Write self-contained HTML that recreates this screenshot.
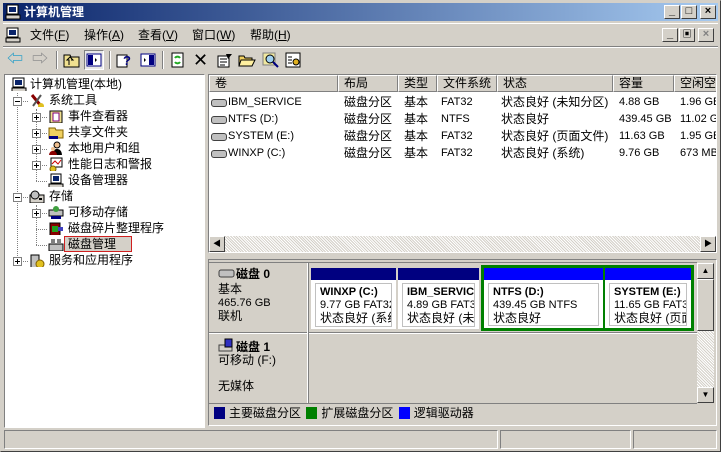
<!DOCTYPE html>
<html><head><meta charset="utf-8">
<style>
*{margin:0;padding:0;box-sizing:border-box}
body{width:721px;height:452px;background:#d4d0c8;font-family:"Liberation Sans","Noto Sans CJK SC","WenQuanYi Zen Hei",sans-serif;font-size:12px;color:#000;position:relative;overflow:hidden}
.a{position:absolute;white-space:nowrap}
.in{border-top:1px solid #808080;border-left:1px solid #808080;border-right:1px solid #fff;border-bottom:1px solid #fff}
.btn{position:absolute;width:16px;height:14px;background:#d4d0c8;border-top:1px solid #fff;border-left:1px solid #fff;border-right:1px solid #404040;border-bottom:1px solid #404040;font-size:11px;line-height:11px;text-align:center;font-weight:bold}
.hdr{position:absolute;top:0;height:17px;background:#d4d0c8;border-top:1px solid #fff;border-left:1px solid #fff;border-right:1px solid #808080;border-bottom:1px solid #808080;padding-left:5px;line-height:15px}
.row{position:absolute;left:0;height:17px;line-height:17px;font-size:11px}
.tree div{position:absolute;white-space:nowrap;line-height:16px}
.tree .pm{position:absolute;width:9px;height:9px;border:1px solid #808080;background:#fff;z-index:2}
.pm::before{content:"";position:absolute;left:1px;top:3px;width:5px;height:1px;background:#000}
.pm.p::after{content:"";position:absolute;left:3px;top:1px;width:1px;height:5px;background:#000}
.tree .vl{position:absolute;width:1px;border-left:1px dotted #808080}
.tree .hl{position:absolute;height:1px;border-top:1px dotted #808080}
.ico{position:absolute;width:16px;height:14px}
.part{position:absolute;top:268px;height:61px;background:#fff}
.part .bar{height:12px}
.part .box{position:absolute;left:4px;right:4px;top:15px;bottom:2px;border:1px solid #c0c0c0;background:#fff;padding:2px 0 0 4px;font-size:11px;line-height:13px;overflow:hidden;white-space:nowrap}
.sq{display:inline-block;width:11px;height:12px;vertical-align:-2px;margin-right:4px}
.dither{background-color:#e8e8e8;background-image:repeating-linear-gradient(45deg,#d4d0c8 0 1px,#fff 1px 2px)}
</style></head><body>
<div class="a" style="left:0;top:0;width:721px;height:452px;border:1px solid #d4d0c8;border-right-color:#404040;border-bottom-color:#404040"></div>
<div class="a" style="left:3px;top:3px;width:715px;height:18px;background:linear-gradient(90deg,#0a246a,#a6caf0)"></div>
<svg class="a" style="left:5px;top:4px" width="16" height="16"><rect x="2" y="1" width="11" height="9" fill="#fff" stroke="#000"/><rect x="4" y="3" width="7" height="5" fill="#0a246a"/><rect x="1" y="11" width="14" height="4" fill="#d4d0c8" stroke="#000"/></svg>
<div class="a" style="left:24px;top:4px;color:#fff;font-weight:bold;font-size:12px;line-height:16px">计算机管理</div>
<div class="btn" style="left:664px;top:5px">_</div>
<div class="btn" style="left:681px;top:5px">□</div>
<div class="btn" style="left:700px;top:5px">×</div>
<div class="a" style="left:3px;top:23px;width:715px;height:1px;background:#fff"></div>
<svg class="a" style="left:5px;top:27px" width="16" height="16"><rect x="2" y="1" width="11" height="9" fill="#fff" stroke="#000"/><rect x="4" y="3" width="7" height="5" fill="#0a246a"/><rect x="1" y="11" width="14" height="4" fill="#d4d0c8" stroke="#000"/></svg>
<div class="a" style="left:30px;top:27px;line-height:16px">文件(<u>F</u>)</div>
<div class="a" style="left:84px;top:27px;line-height:16px">操作(<u>A</u>)</div>
<div class="a" style="left:138px;top:27px;line-height:16px">查看(<u>V</u>)</div>
<div class="a" style="left:192px;top:27px;line-height:16px">窗口(<u>W</u>)</div>
<div class="a" style="left:250px;top:27px;line-height:16px">帮助(<u>H</u>)</div>
<div class="btn" style="left:662px;top:28px">_</div>
<div class="btn" style="left:679px;top:28px;font-size:9px">▣</div>
<div class="btn" style="left:698px;top:28px;color:#808080">×</div>
<div class="a" style="left:3px;top:46px;width:715px;height:1px;background:#808080"></div>
<div class="a" style="left:3px;top:47px;width:715px;height:1px;background:#fff"></div>
<div class="a" style="left:7px;top:50px;color:#30a0c8;font-size:16px;line-height:20px;font-weight:bold">⇦</div>
<div class="a" style="left:32px;top:50px;color:#909090;font-size:16px;line-height:20px;font-weight:bold">⇨</div>
<div class="a" style="left:56px;top:51px;width:2px;height:18px;border-left:1px solid #808080;border-right:1px solid #fff"></div>
<svg class="a" style="left:63px;top:52px" width="18" height="16"><path d="M1 3h6l1 2h8v10H1z" fill="#f0e090" stroke="#000"/><path d="M6 13V8h-2l3-3 3 3H8" fill="none" stroke="#000"/></svg>
<div class="a" style="left:84px;top:50px;width:20px;height:20px;border-top:1px solid #808080;border-left:1px solid #808080;border-right:1px solid #fff;border-bottom:1px solid #fff;background:#e8e8e8"></div>
<svg class="a" style="left:86px;top:53px" width="16" height="14"><rect x="1" y="1" width="14" height="12" fill="#fff" stroke="#000080"/><rect x="2" y="2" width="5" height="10" fill="#000080"/><path d="M9 5l2 2-2 2z" fill="#000"/></svg>
<div class="a" style="left:109px;top:51px;width:2px;height:18px;border-left:1px solid #808080;border-right:1px solid #fff"></div>
<svg class="a" style="left:116px;top:52px" width="18" height="16"><rect x="1" y="3" width="10" height="12" fill="#fff" stroke="#000"/><text x="7" y="13" font-size="13" font-weight="bold" fill="#000080" font-family="Liberation Sans">?</text></svg>
<svg class="a" style="left:140px;top:53px" width="16" height="14"><rect x="1" y="1" width="14" height="12" fill="#fff" stroke="#000080"/><rect x="9" y="2" width="5" height="10" fill="#000080"/><path d="M4 5l2 2-2 2z" fill="#000"/></svg>
<div class="a" style="left:162px;top:51px;width:2px;height:18px;border-left:1px solid #808080;border-right:1px solid #fff"></div>
<svg class="a" style="left:171px;top:52px" width="14" height="16"><rect x="1" y="1" width="11" height="14" fill="#fff" stroke="#000"/><path d="M4 6a3 3 0 0 1 5 0M9 10a3 3 0 0 1-5 0" stroke="#2a2" stroke-width="2" fill="none"/></svg>
<div class="a" style="left:193px;top:49px;font-size:18px;line-height:22px">✕</div>
<svg class="a" style="left:216px;top:52px" width="18" height="16"><rect x="2" y="4" width="11" height="11" fill="#fff" stroke="#000"/><path d="M4 7h7M4 10h7M4 13h5" stroke="#000"/><path d="M10 2l6 0-4 5z" fill="#000"/></svg>
<svg class="a" style="left:238px;top:52px" width="18" height="16"><path d="M1 4h5l1 2h7v8H1z" fill="#f0d060" stroke="#000"/><path d="M3 8h14l-3 6H1z" fill="#fff0a0" stroke="#000"/></svg>
<svg class="a" style="left:262px;top:52px" width="18" height="16"><rect x="1" y="1" width="12" height="12" fill="#f0e8a0" stroke="#808080"/><circle cx="8" cy="7" r="4" fill="#a0d0f0" stroke="#000"/><path d="M11 10l5 5" stroke="#000080" stroke-width="2"/></svg>
<svg class="a" style="left:285px;top:52px" width="18" height="16"><rect x="1" y="1" width="14" height="14" fill="#fff" stroke="#000"/><path d="M3 5h4M3 8h4M3 11h4" stroke="#000"/><circle cx="11" cy="10" r="3" fill="#e0b020" stroke="#000"/></svg>
<div class="a in" style="left:4px;top:74px;width:201px;height:354px;background:#fff"></div>
<div class="tree" style="position:absolute;left:0;top:0">
<div class="vl" style="left:17px;top:93px;height:169px"></div>
<div class="vl" style="left:36px;top:109px;height:72px"></div>
<div class="vl" style="left:36px;top:205px;height:40px"></div>
<div class="hl" style="left:17px;top:101px;width:11px"></div>
<div class="hl" style="left:17px;top:197px;width:11px"></div>
<div class="hl" style="left:17px;top:261px;width:11px"></div>
<div class="hl" style="left:36px;top:117px;width:11px"></div>
<div class="hl" style="left:36px;top:133px;width:11px"></div>
<div class="hl" style="left:36px;top:149px;width:11px"></div>
<div class="hl" style="left:36px;top:165px;width:11px"></div>
<div class="hl" style="left:36px;top:181px;width:11px"></div>
<div class="hl" style="left:36px;top:213px;width:11px"></div>
<div class="hl" style="left:36px;top:229px;width:11px"></div>
<div class="hl" style="left:36px;top:245px;width:11px"></div>
<svg class="ico" style="left:11px;top:77px" width="16" height="16"><rect x="2" y="1" width="11" height="9" fill="#fff" stroke="#000"/><rect x="4" y="3" width="7" height="5" fill="#0a246a"/><rect x="1" y="11" width="14" height="4" fill="#d4d0c8" stroke="#000"/></svg>
<div style="left:30px;top:76px">计算机管理(本地)</div>
<div class="pm" style="left:13px;top:97px"></div>
<svg class="ico" style="left:29px;top:93px" width="16" height="16"><path d="M3 2l9 11" stroke="#800" stroke-width="3"/><path d="M12 2l-8 11" stroke="#555" stroke-width="2"/><circle cx="12" cy="13" r="3" fill="#e0c020"/></svg>
<div style="left:49px;top:92px">系统工具</div>
<div class="pm p" style="left:32px;top:113px"></div>
<svg class="ico" style="left:48px;top:109px" width="16" height="16"><rect x="2" y="2" width="12" height="12" fill="#f0e090" stroke="#000"/><rect x="5" y="4" width="6" height="8" fill="#fff" stroke="#800080"/></svg>
<div style="left:68px;top:108px">事件查看器</div>
<div class="pm p" style="left:32px;top:129px"></div>
<svg class="ico" style="left:48px;top:125px" width="16" height="16"><path d="M1 3h6l1 2h7v8H1z" fill="#f0d060" stroke="#806000"/><rect x="1" y="11" width="9" height="4" fill="#000080"/></svg>
<div style="left:68px;top:124px">共享文件夹</div>
<div class="pm p" style="left:32px;top:145px"></div>
<svg class="ico" style="left:48px;top:141px" width="16" height="16"><circle cx="9" cy="4" r="3" fill="#f0c090" stroke="#000"/><path d="M4 15c0-6 3-7 5-7s5 1 5 7z" fill="#000"/><circle cx="5" cy="8" r="2" fill="#f0c090"/><path d="M1 15c0-4 2-5 4-5s4 1 4 5z" fill="#800"/></svg>
<div style="left:68px;top:140px">本地用户和组</div>
<div class="pm p" style="left:32px;top:161px"></div>
<svg class="ico" style="left:48px;top:157px" width="16" height="16"><rect x="3" y="1" width="11" height="9" fill="#fff" stroke="#000"/><path d="M4 7l3-3 3 3 3-4" stroke="#c00" fill="none"/><circle cx="5" cy="12" r="3" fill="#e0c020" stroke="#806000"/></svg>
<div style="left:68px;top:156px">性能日志和警报</div>
<svg class="ico" style="left:48px;top:173px" width="16" height="16"><rect x="3" y="1" width="10" height="9" fill="#fff" stroke="#000"/><rect x="5" y="3" width="6" height="5" fill="#0a246a"/><rect x="1" y="11" width="14" height="4" fill="#d4d0c8" stroke="#000"/></svg>
<div style="left:68px;top:172px">设备管理器</div>
<div class="pm" style="left:13px;top:193px"></div>
<svg class="ico" style="left:29px;top:189px" width="16" height="16"><rect x="1" y="6" width="14" height="8" fill="#d4d0c8" stroke="#000"/><circle cx="6" cy="6" r="4" fill="#c0c0c0" stroke="#000"/><rect x="10" y="9" width="3" height="2" fill="#000"/></svg>
<div style="left:49px;top:188px">存储</div>
<div class="pm p" style="left:32px;top:209px"></div>
<svg class="ico" style="left:48px;top:205px" width="16" height="16"><rect x="1" y="5" width="14" height="6" fill="#c0c0c0" stroke="#000"/><circle cx="8" cy="4" r="3" fill="#40a040"/><rect x="3" y="11" width="10" height="4" fill="#000080"/></svg>
<div style="left:68px;top:204px">可移动存储</div>
<svg class="ico" style="left:48px;top:221px" width="16" height="16"><rect x="2" y="2" width="10" height="13" fill="#800" stroke="#000"/><rect x="4" y="5" width="6" height="6" fill="#20a020"/><rect x="10" y="6" width="5" height="4" fill="#4040c0"/></svg>
<div style="left:68px;top:220px">磁盘碎片整理程序</div>
<svg class="ico" style="left:48px;top:237px" width="16" height="16"><rect x="1" y="7" width="14" height="7" fill="#c0c0c0" stroke="#000"/><path d="M3 2h4v5H3zM9 2h4v5H9z" fill="#808080"/></svg>
<div style="left:64px;top:236px;width:68px;height:16px;border:1px solid #d02020;background:#d4d0c8;padding-left:3px;line-height:14px">磁盘管理</div>
<div class="pm p" style="left:13px;top:257px"></div>
<svg class="ico" style="left:29px;top:253px" width="16" height="16"><rect x="2" y="2" width="8" height="13" fill="#c0c0c0" stroke="#000"/><circle cx="11" cy="11" r="4" fill="#e0c020" stroke="#806000"/></svg>
<div style="left:49px;top:252px">服务和应用程序</div>
</div>
<div class="a in" style="left:208px;top:74px;width:509px;height:179px;background:#fff;overflow:hidden">
 <div class="hdr" style="left:0;width:129px">卷</div>
 <div class="hdr" style="left:129px;width:60px">布局</div>
 <div class="hdr" style="left:189px;width:39px">类型</div>
 <div class="hdr" style="left:228px;width:60px">文件系统</div>
 <div class="hdr" style="left:288px;width:116px">状态</div>
 <div class="hdr" style="left:404px;width:61px">容量</div>
 <div class="hdr" style="left:465px;width:60px">空闲空间</div>
 <div class="row" style="top:19px;width:600px"><span class="a" style="left:2px;top:5px;width:16px;height:8px;border:1px solid #404040;border-radius:3px;background:#c0c0c0"></span><span class="a" style="left:19px">IBM_SERVICE</span><span class="a" style="left:135px;font-size:12px">磁盘分区</span><span class="a" style="left:195px;font-size:12px">基本</span><span class="a" style="left:232px">FAT32</span><span class="a" style="left:292px;font-size:12px">状态良好 (未知分区)</span><span class="a" style="left:410px">4.88 GB</span><span class="a" style="left:471px">1.96 GB</span></div>
 <div class="row" style="top:36px;width:600px"><span class="a" style="left:2px;top:5px;width:16px;height:8px;border:1px solid #404040;border-radius:3px;background:#c0c0c0"></span><span class="a" style="left:19px">NTFS (D:)</span><span class="a" style="left:135px;font-size:12px">磁盘分区</span><span class="a" style="left:195px;font-size:12px">基本</span><span class="a" style="left:232px">NTFS</span><span class="a" style="left:292px;font-size:12px">状态良好</span><span class="a" style="left:410px">439.45 GB</span><span class="a" style="left:471px">11.02 GB</span></div>
 <div class="row" style="top:53px;width:600px"><span class="a" style="left:2px;top:5px;width:16px;height:8px;border:1px solid #404040;border-radius:3px;background:#c0c0c0"></span><span class="a" style="left:19px">SYSTEM (E:)</span><span class="a" style="left:135px;font-size:12px">磁盘分区</span><span class="a" style="left:195px;font-size:12px">基本</span><span class="a" style="left:232px">FAT32</span><span class="a" style="left:292px;font-size:12px">状态良好 (页面文件)</span><span class="a" style="left:410px">11.63 GB</span><span class="a" style="left:471px">1.95 GB</span></div>
 <div class="row" style="top:70px;width:600px"><span class="a" style="left:2px;top:5px;width:16px;height:8px;border:1px solid #404040;border-radius:3px;background:#c0c0c0"></span><span class="a" style="left:19px">WINXP (C:)</span><span class="a" style="left:135px;font-size:12px">磁盘分区</span><span class="a" style="left:195px;font-size:12px">基本</span><span class="a" style="left:232px">FAT32</span><span class="a" style="left:292px;font-size:12px">状态良好 (系统)</span><span class="a" style="left:410px">9.76 GB</span><span class="a" style="left:471px">673 MB</span></div>
 <div class="a dither" style="left:0;top:161px;width:507px;height:16px"></div>
 <div class="btn" style="left:0;top:161px;height:16px;font-size:8px;line-height:13px">◀</div>
 <div class="btn" style="left:491px;top:161px;height:16px;font-size:8px;line-height:13px">▶</div>
</div>
<div class="a in" style="left:208px;top:259px;width:509px;height:167px;background:#d4d0c8"></div>
<div class="a" style="left:209px;top:262px;width:488px;height:1px;background:#808080"></div>
<div class="a" style="left:209px;top:332px;width:488px;height:1px;background:#808080"></div>
<div class="a" style="left:209px;top:333px;width:488px;height:1px;background:#fff"></div>
<div class="a" style="left:307px;top:263px;width:1px;height:140px;background:#fff"></div>
<div class="a" style="left:308px;top:263px;width:1px;height:140px;background:#808080"></div>
<div class="a" style="left:209px;top:403px;width:488px;height:1px;background:#808080"></div>
<svg class="a" style="left:218px;top:268px" width="18" height="12"><rect x="1" y="2" width="15" height="7" rx="2" fill="#c0c0c0" stroke="#404040"/></svg>
<div class="a" style="left:236px;top:267px;font-weight:bold;line-height:14px">磁盘 0</div>
<div class="a" style="left:218px;top:282px;line-height:14px">基本</div>
<div class="a" style="left:218px;top:296px;line-height:14px;font-size:11px">465.76 GB</div>
<div class="a" style="left:218px;top:309px;line-height:14px">联机</div>
<div class="part" style="left:311px;width:85px"><div class="bar" style="background:#000080"></div><div class="box"><b>WINXP (C:)</b><br>9.77 GB FAT32<br><span style="font-size:12px">状态良好 (系统)</span></div></div>
<div class="part" style="left:398px;width:81px"><div class="bar" style="background:#000080"></div><div class="box"><b>IBM_SERVICE</b><br>4.89 GB FAT32<br><span style="font-size:12px">状态良好 (未知)</span></div></div>
<div class="a" style="left:481px;top:265px;width:213px;height:66px;border:3px solid #008000;background:#008000"></div>
<div class="part" style="left:484px;width:119px;top:268px;height:60px"><div class="bar" style="background:#0000ff"></div><div class="box"><b>NTFS (D:)</b><br>439.45 GB NTFS<br><span style="font-size:12px">状态良好</span></div></div>
<div class="part" style="left:605px;width:86px;top:268px;height:60px"><div class="bar" style="background:#0000ff"></div><div class="box"><b>SYSTEM (E:)</b><br>11.65 GB FAT32<br><span style="font-size:12px">状态良好 (页面文件)</span></div></div>
<svg class="a" style="left:218px;top:338px" width="18" height="16"><rect x="1" y="7" width="13" height="6" fill="#d4d0c8" stroke="#404040"/><rect x="7" y="1" width="7" height="8" fill="#3030c0" stroke="#000"/></svg>
<div class="a" style="left:236px;top:340px;font-weight:bold;line-height:14px">磁盘 1</div>
<div class="a" style="left:218px;top:353px;line-height:14px">可移动 (F:)</div>
<div class="a" style="left:218px;top:379px;line-height:14px">无媒体</div>
<div class="a dither" style="left:697px;top:263px;width:17px;height:140px"></div>
<div class="btn" style="left:697px;top:263px;width:17px;height:16px;font-size:8px;line-height:13px">▲</div>
<div class="btn" style="left:697px;top:279px;width:17px;height:52px"></div>
<div class="btn" style="left:697px;top:387px;width:17px;height:16px;font-size:8px;line-height:13px">▼</div>
<div class="a" style="left:214px;top:406px;line-height:15px"><span class="sq" style="background:#000080"></span>主要磁盘分区 <span class="sq" style="background:#008000;margin-left:2px"></span>扩展磁盘分区 <span class="sq" style="background:#0000ff;margin-left:2px"></span>逻辑驱动器</div>
<div class="a in" style="left:4px;top:430px;width:494px;height:19px"></div>
<div class="a in" style="left:500px;top:430px;width:131px;height:19px"></div>
<div class="a in" style="left:633px;top:430px;width:84px;height:19px"></div>
</body></html>
